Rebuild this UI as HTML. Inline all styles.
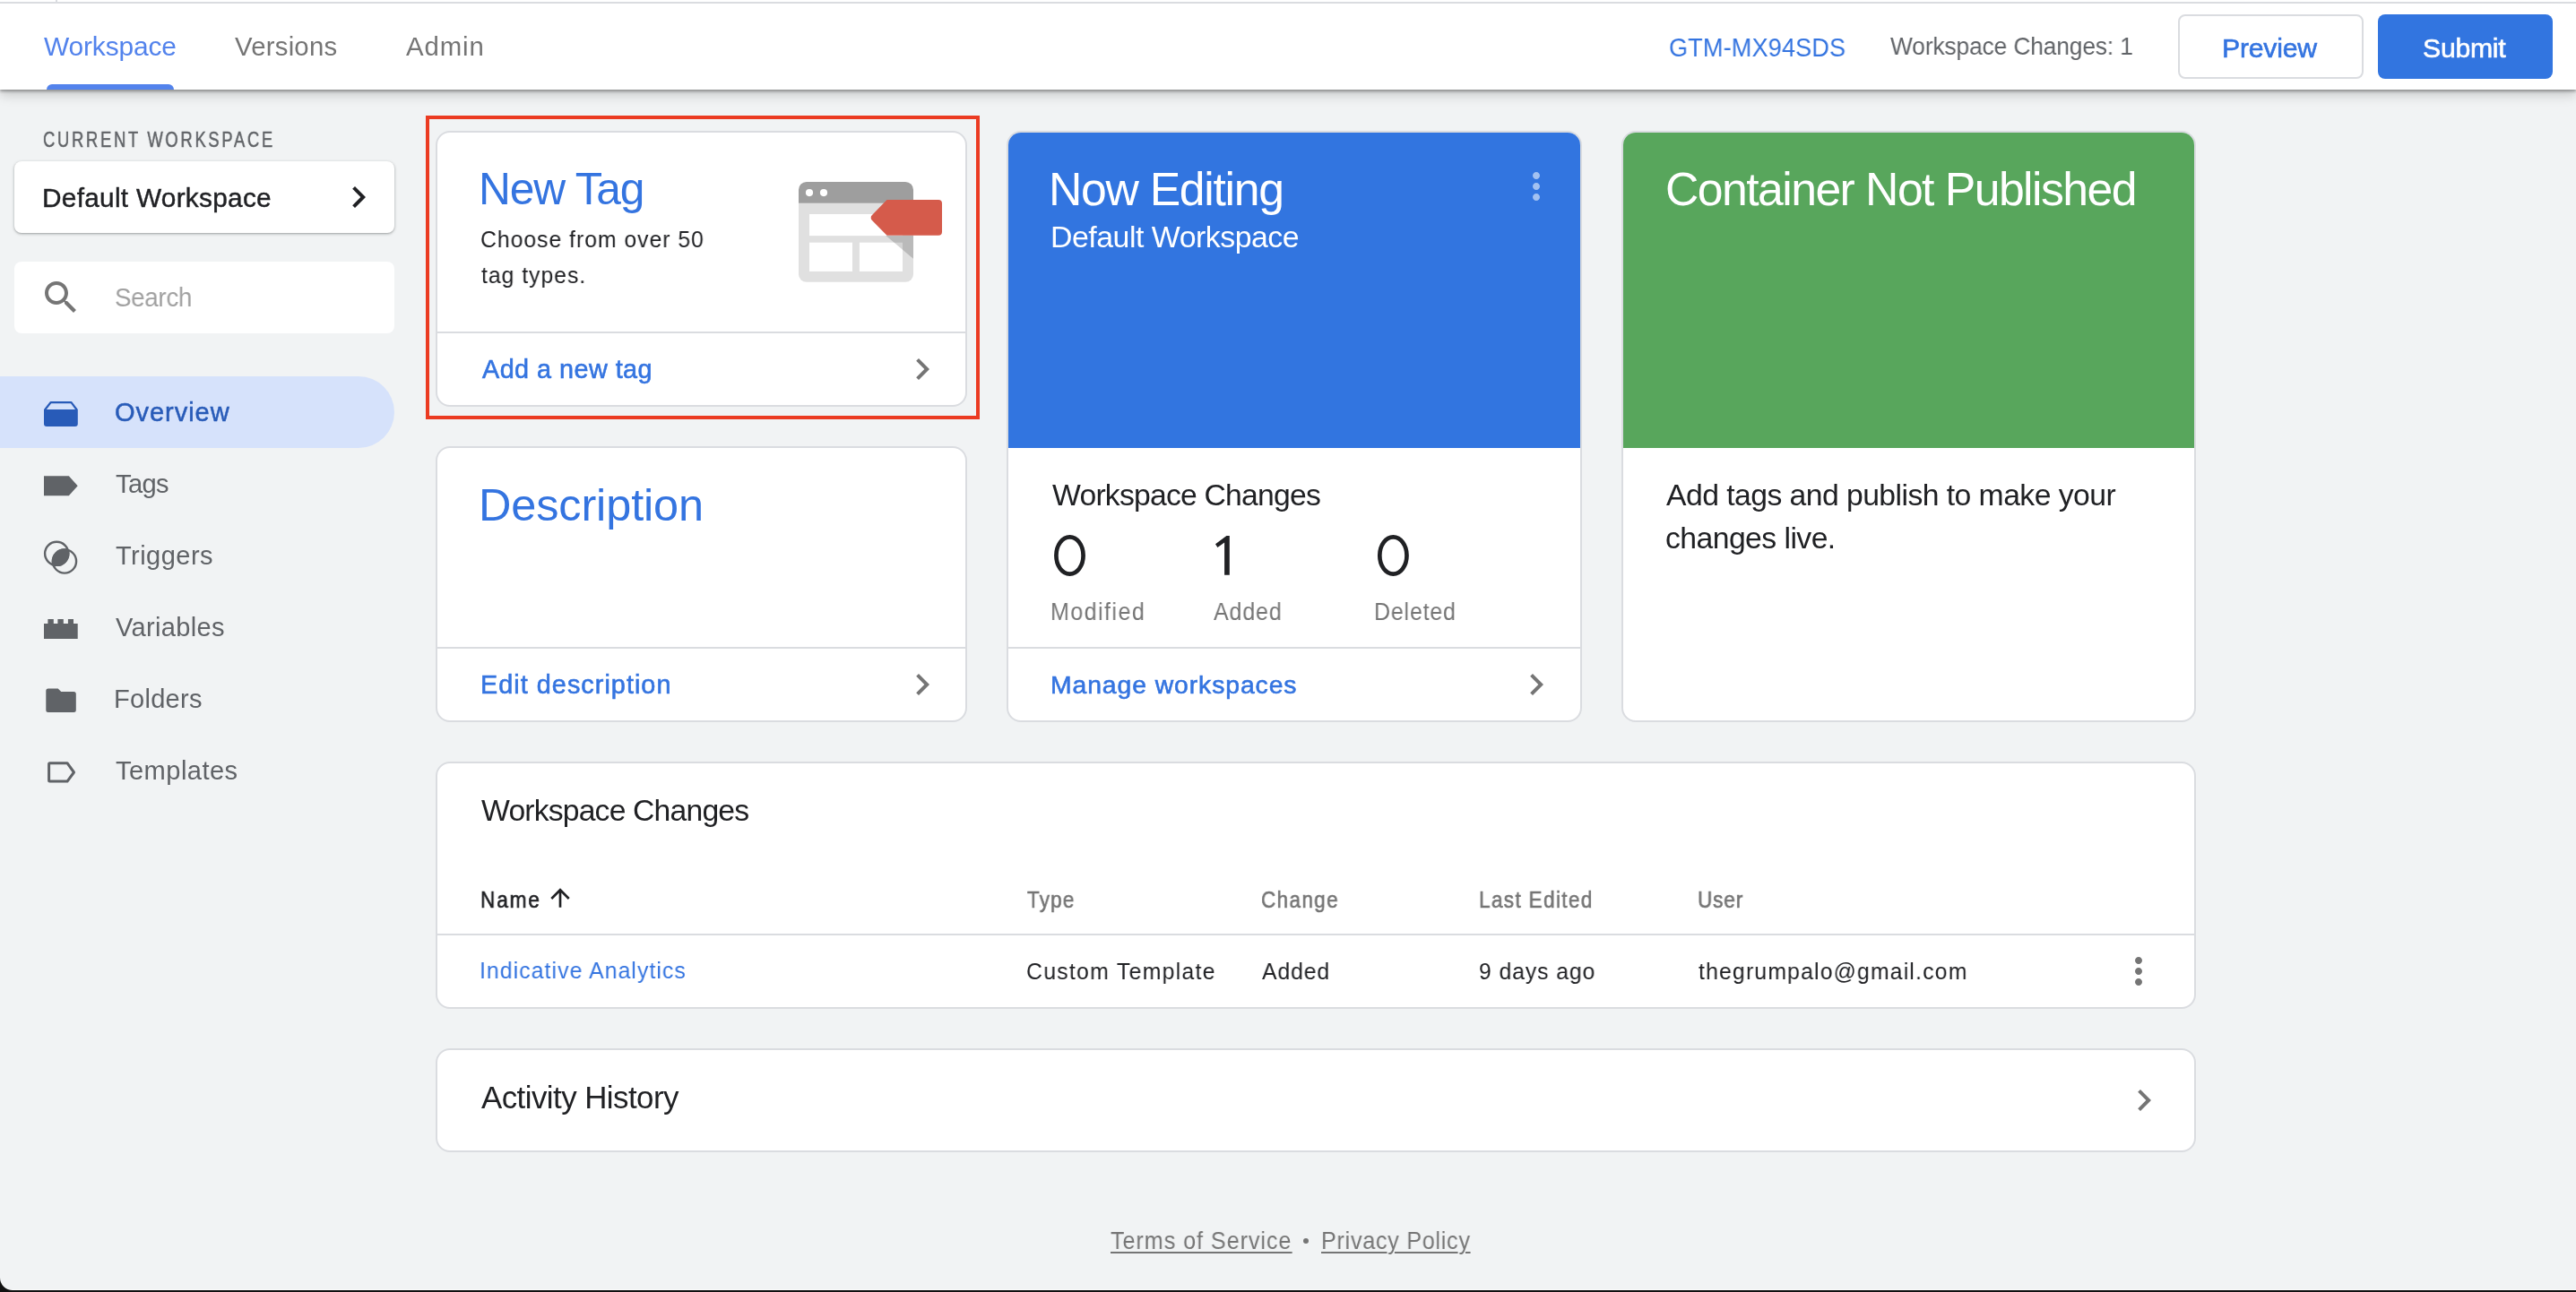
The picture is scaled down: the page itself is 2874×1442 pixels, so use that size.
<!DOCTYPE html>
<html><head><meta charset="utf-8"><style>
html,body{margin:0;padding:0;width:2874px;height:1442px;overflow:hidden;background:#f1f3f4;font-family:"Liberation Sans",sans-serif;}
.b{position:absolute;box-sizing:content-box}
.ic{position:absolute;overflow:visible}
.card{background:#fff;border:2px solid #dadce0;border-radius:16px}
.t{position:absolute;white-space:nowrap;line-height:1;z-index:4;will-change:transform}
</style></head><body>
<div class="b" style="left:0;top:0;width:2874px;height:100px;background:#fff;box-shadow:0 2px 3px rgba(0,0,0,.32),0 6px 12px rgba(0,0,0,.18);z-index:2"></div>
<div class="b" style="left:0;top:2px;width:2874px;height:2px;background:#dadce0;z-index:3"></div>
<div class="b" style="left:62px;top:0;width:2px;height:2px;background:#dadce0;z-index:3"></div>
<div class="b" style="left:52px;top:94px;width:142px;height:6px;background:#5383ec;border-radius:6px 6px 0 0;z-index:3"></div>
<div class="b" style="left:2430px;top:16px;width:203px;height:68px;border:2px solid #dadce0;border-radius:8px;background:#fff;z-index:3"></div>
<div class="b" style="left:2653px;top:16px;width:195px;height:72px;background:#3275e0;border-radius:8px;z-index:3"></div>
<div class="b" style="left:16px;top:180px;width:424px;height:80px;background:#fff;border-radius:8px;box-shadow:0 1px 2px rgba(60,64,67,.3),0 1px 3px 1px rgba(60,64,67,.15)"></div>
<svg class="ic" style="left:376px;top:196px;width:48px;height:48px" viewBox="0 0 24 24"><path fill="#202124" d="M10 6L8.59 7.41 13.17 12l-4.58 4.59L10 18l6-6z"/></svg>
<div class="b" style="left:16px;top:292px;width:424px;height:80px;background:#fff;border-radius:8px"></div>
<svg class="ic" style="left:44px;top:308px;width:48px;height:48px" viewBox="0 0 24 24"><path fill="#757575" d="M15.5 14h-.79l-.28-.27C15.41 12.59 16 11.11 16 9.5 16 5.91 13.09 3 9.5 3S3 5.91 3 9.5 5.91 16 9.5 16c1.61 0 3.09-.59 4.23-1.57l.27.28v.79l5 4.99L20.49 19l-4.99-5zm-6 0C7.01 14 5 11.99 5 9.5S7.01 5 9.5 5 14 7.01 14 9.5 11.99 14 9.5 14z"/></svg>
<div class="b" style="left:0;top:420px;width:440px;height:80px;background:#d6e2fb;border-radius:0 40px 40px 0"></div>
<svg class="ic" style="left:40px;top:440px;width:60px;height:50px" viewBox="40 440 60 50"><path fill="none" stroke="#285bb8" stroke-width="2.2" stroke-linejoin="round" d="M50 457.5 L56.5 449.2 L79.5 449.2 L85.8 457.5"/><path fill="#285bb8" d="M49 457 H86.8 V473 a3 3 0 0 1 -3 3 H52 a3 3 0 0 1 -3 -3 Z"/></svg>
<svg class="ic" style="left:40px;top:520px;width:60px;height:45px" viewBox="40 520 60 45"><path fill="#606367" d="M49 531.2 H76.8 L86.7 542.2 L76.8 553.3 H49 Z"/></svg>
<svg class="ic" style="left:40px;top:595px;width:60px;height:50px" viewBox="40 595 60 50"><defs><clipPath id="c1"><circle cx="63.2" cy="617.8" r="14.3"/></clipPath></defs><circle cx="63.2" cy="617.8" r="13.1" fill="none" stroke="#606367" stroke-width="2.4"/><circle cx="72" cy="626.5" r="13.1" fill="none" stroke="#606367" stroke-width="2.4"/><circle cx="72" cy="626.5" r="14.3" fill="#606367" clip-path="url(#c1)"/></svg>
<svg class="ic" style="left:40px;top:680px;width:60px;height:45px" viewBox="40 680 60 45"><path fill="#606367" d="M49 696 H53.4 V691.1 H59.8 V696 H64.4 V691.1 H70.8 V696 H75.9 V691.1 H82 V696 H86.7 V713.1 H49 Z"/></svg>
<svg class="ic" style="left:40px;top:755px;width:60px;height:50px" viewBox="40 755 60 50"><path fill="#606367" d="M53.8 768.6 H64.7 L68.2 772.1 H82.3 a2.5 2.5 0 0 1 2.5 2.5 V792.6 a2.5 2.5 0 0 1 -2.5 2.5 H53.8 a2.5 2.5 0 0 1 -2.5 -2.5 V771.1 a2.5 2.5 0 0 1 2.5 -2.5 Z"/></svg>
<svg class="ic" style="left:40px;top:840px;width:60px;height:45px" viewBox="40 840 60 45"><path fill="none" stroke="#606367" stroke-width="3" stroke-linejoin="round" d="M55.6 851.7 H75 L82.5 862 L75 872.1 H55.6 a1 1 0 0 1 -1 -1 V852.7 a1 1 0 0 1 1 -1 Z"/></svg>
<div class="b" style="left:475px;top:129px;width:610px;height:331px;border:4px solid #eb3b22;z-index:1"></div>
<div class="b card" style="left:486px;top:146px;width:589px;height:304px;"></div>
<div class="b" style="left:488px;top:370px;width:589px;height:2px;background:#dadce0"></div>
<svg class="ic" style="left:1005px;top:388px;width:48px;height:48px" viewBox="0 0 24 24"><path fill="#757575" d="M10 6L8.59 7.41 13.17 12l-4.58 4.59L10 18l6-6z"/></svg>
<svg class="ic" style="left:880px;top:190px;width:180px;height:140px" viewBox="880 190 180 140">
<path fill="#e0e0e0" d="M891 226.8 H1019 V306 a8.8 8.8 0 0 1 -8.8 8.8 H899.8 a8.8 8.8 0 0 1 -8.8 -8.8 Z"/>
<path fill="#9e9e9e" d="M899.8 203 H1010.2 a8.8 8.8 0 0 1 8.8 8.8 V226.8 H891 V211.8 a8.8 8.8 0 0 1 8.8 -8.8 Z"/>
<circle cx="903" cy="215.1" r="4.1" fill="#fff"/><circle cx="919" cy="215.1" r="4.1" fill="#fff"/>
<rect x="903" y="239" width="104" height="24.1" fill="#fff"/>
<rect x="903" y="270.7" width="48" height="32.2" fill="#fff"/>
<rect x="958.9" y="270.7" width="48.1" height="32.2" fill="#fff"/>
<path fill="rgba(0,0,0,0.17)" d="M988.4 263 H1019 V288.8 Z"/>
<path fill="#d55b4b" d="M989.5 223 H1047 a4 4 0 0 1 4 4 V258.8 a4 4 0 0 1 -4 4 H989.5 L973 246 a4 4 0 0 1 0 -6 Z"/>
</svg>
<div class="b card" style="left:486px;top:498px;width:589px;height:304px;"></div>
<div class="b" style="left:488px;top:722px;width:589px;height:2px;background:#dadce0"></div>
<svg class="ic" style="left:1005px;top:740px;width:48px;height:48px" viewBox="0 0 24 24"><path fill="#757575" d="M10 6L8.59 7.41 13.17 12l-4.58 4.59L10 18l6-6z"/></svg>
<div class="b card" style="left:1123px;top:146px;width:638px;height:656px;"></div>
<div class="b" style="left:1125px;top:148px;width:638px;height:352px;background:#3275e0;border-radius:14px 14px 0 0"></div>
<svg class="ic" style="left:1690px;top:184px;width:48px;height:48px" viewBox="0 0 24 24"><path fill="rgba(255,255,255,0.55)" d="M12 8c1.1 0 2-.9 2-2s-.9-2-2-2-2 .9-2 2 .9 2 2 2zm0 2c-1.1 0-2 .9-2 2s.9 2 2 2 2-.9 2-2-.9-2-2-2zm0 6c-1.1 0-2 .9-2 2s.9 2 2 2 2-.9 2-2-.9-2-2-2z"/></svg>
<div class="b" style="left:1125px;top:722px;width:638px;height:2px;background:#dadce0"></div>
<svg class="ic" style="left:1690px;top:740px;width:48px;height:48px" viewBox="0 0 24 24"><path fill="#757575" d="M10 6L8.59 7.41 13.17 12l-4.58 4.59L10 18l6-6z"/></svg>
<div class="b card" style="left:1809px;top:146px;width:637px;height:656px;"></div>
<div class="b" style="left:1811px;top:148px;width:637px;height:352px;background:#58a65c;border-radius:14px 14px 0 0"></div>
<svg class="ic" style="left:1150px;top:590px;width:450px;height:60px" viewBox="1150 590 450 60"><ellipse cx="1193.5" cy="620" rx="15.1" ry="20.6" fill="none" stroke="#202124" stroke-width="4.7"/><path fill="#202124" d="M1368.4 598.1 H1371.8 V641.8 H1366.1 V605.5 L1358.4 611 L1356 607.3 Z"/><ellipse cx="1554.4" cy="620" rx="15.1" ry="20.6" fill="none" stroke="#202124" stroke-width="4.7"/></svg>
<div class="b card" style="left:486px;top:850px;width:1960px;height:272px;"></div>
<div class="b" style="left:488px;top:1042px;width:1960px;height:2px;background:#dadce0"></div>
<svg class="ic" style="left:608.7px;top:985.8px;width:32px;height:32px" viewBox="0 0 24 24"><path fill="#202124" d="M4 12l1.41 1.41L11 7.83V20h2V7.83l5.58 5.59L20 12l-8-8-8 8z"/></svg>
<svg class="ic" style="left:2361.7px;top:1059.6px;width:48px;height:48px" viewBox="0 0 24 24"><path fill="#757575" d="M12 8c1.1 0 2-.9 2-2s-.9-2-2-2-2 .9-2 2 .9 2 2 2zm0 2c-1.1 0-2 .9-2 2s.9 2 2 2 2-.9 2-2-.9-2-2-2zm0 6c-1.1 0-2 .9-2 2s.9 2 2 2 2-.9 2-2-.9-2-2-2z"/></svg>
<div class="b card" style="left:486px;top:1170px;width:1960px;height:112px;"></div>
<svg class="ic" style="left:2368px;top:1204px;width:48px;height:48px" viewBox="0 0 24 24"><path fill="#757575" d="M10 6L8.59 7.41 13.17 12l-4.58 4.59L10 18l6-6z"/></svg>
<div class="b" style="left:1453.5px;top:1381.7px;width:6px;height:6px;border-radius:3px;background:#757575"></div>
<div class="b" style="left:0;top:1440px;width:2874px;height:2px;background:#111;z-index:5"></div>
<div class="b" style="left:12px;top:1439px;width:2862px;height:1px;background:rgba(255,255,255,.7);z-index:5"></div>
<svg class="ic" style="left:0;top:1426px;width:16px;height:16px;z-index:5" viewBox="0 0 16 16"><path fill="#111" d="M0 0 V16 H16 V14 H14 A14 14 0 0 1 0 0 Z"/></svg>
<div class="t" id="tab_ws" style="left:48.7px;top:37.3px;font-size:29.94px;color:#5383ec;letter-spacing:-0.16px;">Workspace</div>
<div class="t" id="tab_ver" style="left:262.0px;top:37.0px;font-size:29.36px;color:#757575;letter-spacing:0.22px;">Versions</div>
<div class="t" id="tab_adm" style="left:453.0px;top:37.0px;font-size:29.36px;color:#757575;letter-spacing:0.90px;">Admin</div>
<div class="t" id="gtm" style="left:1862.1px;top:38.9px;font-size:29.07px;color:#3474e0;letter-spacing:0.20px;transform:scaleX(0.93);transform-origin:0 0;">GTM-MX94SDS</div>
<div class="t" id="wsc1" style="left:2108.8px;top:37.0px;font-size:28.34px;color:#606367;letter-spacing:-0.14px;transform:scaleX(0.93);transform-origin:0 0;">Workspace Changes: 1</div>
<div class="t" id="preview" style="left:2479.3px;top:39.4px;font-size:30.23px;color:#3474e0;letter-spacing:-0.24px;-webkit-text-stroke:0.6px #3474e0;">Preview</div>
<div class="t" id="submit" style="left:2702.9px;top:39.4px;font-size:30.23px;color:#ffffff;letter-spacing:-0.27px;-webkit-text-stroke:0.6px #ffffff;">Submit</div>
<div class="t" id="curws" style="left:48.2px;top:145.4px;font-size:23.55px;color:#606367;letter-spacing:3.49px;-webkit-text-stroke:0.5px #606367;transform:scaleX(0.78);transform-origin:0 0;">CURRENT WORKSPACE</div>
<div class="t" id="defws" style="left:47.0px;top:205.5px;font-size:29.8px;color:#202124;letter-spacing:0.28px;-webkit-text-stroke:0.4px #202124;">Default Workspace</div>
<div class="t" id="search" style="left:128.1px;top:317.0px;font-size:29.8px;color:#a0a0a0;letter-spacing:-0.30px;transform:scaleX(0.93);transform-origin:0 0;">Search</div>
<div class="t" id="nav_ov" style="left:128.1px;top:446.0px;font-size:29.07px;color:#285bb8;letter-spacing:0.94px;-webkit-text-stroke:0.5px #285bb8;">Overview</div>
<div class="t" id="nav_tags" style="left:129.0px;top:526.0px;font-size:29.07px;color:#606367;letter-spacing:-0.62px;">Tags</div>
<div class="t" id="nav_trig" style="left:129.0px;top:606.0px;font-size:29.07px;color:#606367;letter-spacing:0.43px;">Triggers</div>
<div class="t" id="nav_var" style="left:129.0px;top:686.0px;font-size:29.07px;color:#606367;letter-spacing:0.32px;">Variables</div>
<div class="t" id="nav_fold" style="left:127.0px;top:766.0px;font-size:29.07px;color:#606367;letter-spacing:0.27px;">Folders</div>
<div class="t" id="nav_tmpl" style="left:129.0px;top:846.0px;font-size:29.07px;color:#606367;letter-spacing:0.46px;">Templates</div>
<div class="t" id="newtag" style="left:534.0px;top:187.0px;font-size:49.71px;color:#3474e0;letter-spacing:-1.17px;">New Tag</div>
<div class="t" id="choose1" style="left:535.7px;top:254.0px;font-size:26.6px;color:#202124;letter-spacing:1.07px;transform:scaleX(0.93);transform-origin:0 0;">Choose from over 50</div>
<div class="t" id="choose2" style="left:536.6px;top:293.9px;font-size:26.6px;color:#202124;letter-spacing:1.07px;transform:scaleX(0.93);transform-origin:0 0;">tag types.</div>
<div class="t" id="addtag" style="left:537.8px;top:397.8px;font-size:28.78px;color:#3474e0;letter-spacing:0.47px;-webkit-text-stroke:0.6px #3474e0;">Add a new tag</div>
<div class="t" id="nowed" style="left:1170.3px;top:186.0px;font-size:51.74px;color:#ffffff;letter-spacing:-1.30px;">Now Editing</div>
<div class="t" id="nowws" style="left:1172.3px;top:248.3px;font-size:33.87px;color:#ffffff;letter-spacing:-0.49px;">Default Workspace</div>
<div class="t" id="wsch" style="left:1174.0px;top:536.2px;font-size:33.72px;color:#202124;letter-spacing:-0.79px;">Workspace Changes</div>
<div class="t" id="lmod" style="left:1172.1px;top:670.0px;font-size:26.89px;color:#757575;letter-spacing:1.58px;transform:scaleX(0.93);transform-origin:0 0;">Modified</div>
<div class="t" id="ladd" style="left:1354.0px;top:670.0px;font-size:26.89px;color:#757575;letter-spacing:0.92px;transform:scaleX(0.93);transform-origin:0 0;">Added</div>
<div class="t" id="ldel" style="left:1532.9px;top:670.0px;font-size:26.89px;color:#757575;letter-spacing:0.86px;transform:scaleX(0.93);transform-origin:0 0;">Deleted</div>
<div class="t" id="manage" style="left:1172.3px;top:750.0px;font-size:28.34px;color:#3474e0;letter-spacing:0.92px;-webkit-text-stroke:0.6px #3474e0;">Manage workspaces</div>
<div class="t" id="cnp" style="left:1857.7px;top:186.0px;font-size:51.74px;color:#ffffff;letter-spacing:-1.56px;">Container Not Published</div>
<div class="t" id="addt1" style="left:1859.3px;top:536.2px;font-size:33.72px;color:#202124;letter-spacing:-0.55px;">Add tags and publish to make your</div>
<div class="t" id="addt2" style="left:1858.3px;top:584.3px;font-size:33.72px;color:#202124;letter-spacing:-0.55px;">changes live.</div>
<div class="t" id="desc" style="left:534.4px;top:538.5px;font-size:50.44px;color:#3474e0;letter-spacing:-0.12px;">Description</div>
<div class="t" id="editd" style="left:536.3px;top:750.0px;font-size:28.78px;color:#3474e0;letter-spacing:1.05px;-webkit-text-stroke:0.6px #3474e0;">Edit description</div>
<div class="t" id="tws" style="left:537.0px;top:888.3px;font-size:33.72px;color:#202124;letter-spacing:-0.83px;">Workspace Changes</div>
<div class="t" id="th_name" style="left:535.5px;top:991.6px;font-size:25.0px;color:#202124;letter-spacing:2.13px;-webkit-text-stroke:0.6px #202124;transform:scaleX(0.9);transform-origin:0 0;">Name</div>
<div class="t" id="th_type" style="left:1146.3px;top:991.8px;font-size:25.0px;color:#757575;letter-spacing:1.29px;-webkit-text-stroke:0.6px #757575;transform:scaleX(0.9);transform-origin:0 0;">Type</div>
<div class="t" id="th_change" style="left:1406.9px;top:991.8px;font-size:25.0px;color:#757575;letter-spacing:1.52px;-webkit-text-stroke:0.6px #757575;transform:scaleX(0.9);transform-origin:0 0;">Change</div>
<div class="t" id="th_last" style="left:1649.7px;top:991.8px;font-size:25.0px;color:#757575;letter-spacing:1.53px;-webkit-text-stroke:0.6px #757575;transform:scaleX(0.9);transform-origin:0 0;">Last Edited</div>
<div class="t" id="th_user" style="left:1894.4px;top:991.5px;font-size:25.0px;color:#757575;letter-spacing:1.02px;-webkit-text-stroke:0.6px #757575;transform:scaleX(0.9);transform-origin:0 0;">User</div>
<div class="t" id="td_name" style="left:535.1px;top:1070.4px;font-size:26.6px;color:#3474e0;letter-spacing:1.18px;transform:scaleX(0.93);transform-origin:0 0;">Indicative Analytics</div>
<div class="t" id="td_type" style="left:1145.1px;top:1071.0px;font-size:26.6px;color:#202124;letter-spacing:1.42px;transform:scaleX(0.93);transform-origin:0 0;">Custom Template</div>
<div class="t" id="td_change" style="left:1407.5px;top:1071.0px;font-size:26.6px;color:#202124;letter-spacing:1.00px;transform:scaleX(0.93);transform-origin:0 0;">Added</div>
<div class="t" id="td_last" style="left:1650.1px;top:1071.0px;font-size:26.6px;color:#202124;letter-spacing:0.99px;transform:scaleX(0.93);transform-origin:0 0;">9 days ago</div>
<div class="t" id="td_user" style="left:1895.0px;top:1070.5px;font-size:26.6px;color:#202124;letter-spacing:1.29px;transform:scaleX(0.93);transform-origin:0 0;">thegrumpalo@gmail.com</div>
<div class="t" id="act" style="left:537.0px;top:1208.0px;font-size:34.88px;color:#202124;letter-spacing:-0.55px;">Activity History</div>
<div class="t" id="tos" style="left:1239.0px;top:1371.9px;font-size:27.03px;color:#757575;letter-spacing:1.03px;text-decoration:underline;text-decoration-thickness:2px;text-underline-offset:3px;transform:scaleX(0.93);transform-origin:0 0;">Terms of Service</div>
<div class="t" id="pp" style="left:1473.8px;top:1371.9px;font-size:27.03px;color:#757575;letter-spacing:0.79px;text-decoration:underline;text-decoration-thickness:2px;text-underline-offset:3px;transform:scaleX(0.93);transform-origin:0 0;">Privacy Policy</div>
</body></html>
